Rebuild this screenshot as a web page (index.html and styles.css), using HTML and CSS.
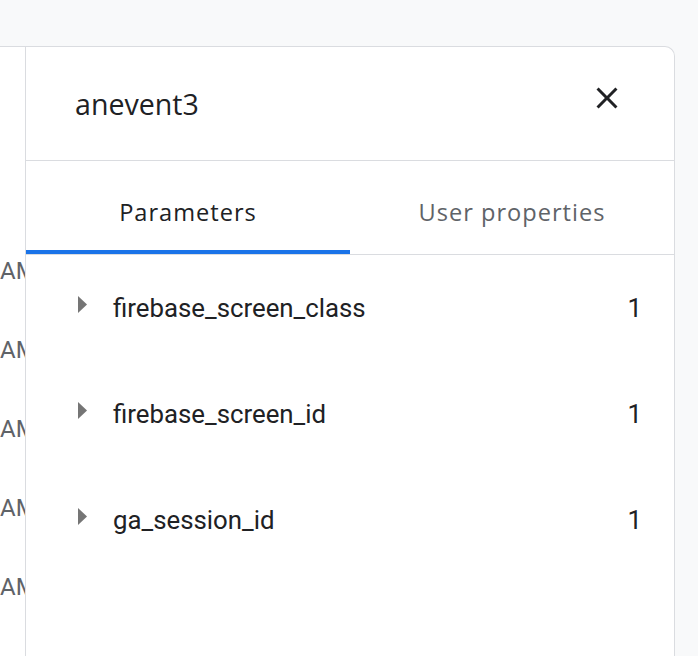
FILE: index.html
```html
<!DOCTYPE html>
<html lang="en">
<head>
<meta charset="utf-8">
<title>anevent3</title>
<link rel="stylesheet" href="styles.css">
</head>
<body>
<div class="page">
  <div class="table-edge">
    <div class="edge-rows">
      <div class="edge-row">AM</div>
      <div class="edge-row">AM</div>
      <div class="edge-row">AM</div>
      <div class="edge-row">AM</div>
      <div class="edge-row">AM</div>
    </div>
  </div>
  <aside class="panel">
    <header class="panel-header">
      <h2 class="title">anevent3</h2>
      <button class="close" aria-label="Close">
        <svg width="36" height="36" viewBox="0 0 24 24"><path d="M19 6.41L17.59 5 12 10.59 6.41 5 5 6.41 10.59 12 5 17.59 6.41 19 12 13.41 17.59 19 19 17.59 13.41 12z"/></svg>
      </button>
    </header>
    <nav class="tabs">
      <div class="tab active">Parameters</div>
      <div class="tab">User properties</div>
    </nav>
    <ul class="params">
      <li class="param">
        <svg class="caret" width="9" height="17" viewBox="0 0 9 17"><path d="M0 0L9 8.5 0 17z"/></svg>
        <span class="name">firebase_screen_class</span>
        <span class="count">1</span>
      </li>
      <li class="param">
        <svg class="caret" width="9" height="17" viewBox="0 0 9 17"><path d="M0 0L9 8.5 0 17z"/></svg>
        <span class="name">firebase_screen_id</span>
        <span class="count">1</span>
      </li>
      <li class="param">
        <svg class="caret" width="9" height="17" viewBox="0 0 9 17"><path d="M0 0L9 8.5 0 17z"/></svg>
        <span class="name">ga_session_id</span>
        <span class="count">1</span>
      </li>
    </ul>
  </aside>
  <div class="gutter"></div>
</div>
</body>
</html>
```

FILE: styles.css
```css
html, body {
  margin: 0;
  padding: 0;
}

body {
  background: #f8f9fa;
  width: 698px;
  height: 656px;
  overflow: hidden;
  font-family: Roboto, "Liberation Sans", Arial, sans-serif;
  color: #202124;
}

.page {
  display: flex;
  box-sizing: border-box;
  height: 656px;
  padding-top: 46px;
}

.table-edge {
  flex: none;
  width: 25px;
  background: #fff;
  border-top: 1px solid #dadce0;
  overflow: hidden;
}

.edge-rows {
  padding-top: 185px;
}

.edge-row {
  height: 79px;
  line-height: 79px;
  font-size: 24px;
  color: #5f6368;
  white-space: nowrap;
}

.panel {
  flex: none;
  box-sizing: border-box;
  width: 650px;
  background: #fff;
  border: 1px solid #dadce0;
  border-bottom: none;
  border-radius: 0 10px 0 0;
  display: flex;
  flex-direction: column;
}

.panel-header {
  height: 113px;
  border-bottom: 1px solid #dadce0;
  display: flex;
  align-items: flex-start;
  justify-content: space-between;
  padding: 0 49px 0 49px;
}

.title {
  margin: 38px 0 0;
  font-family: "Open Sans", Roboto, sans-serif;
  font-weight: 400;
  font-size: 28.6px;
  line-height: 38px;
  color: #202124;
}

.close {
  margin-top: 33px;
  width: 36px;
  height: 36px;
  padding: 0;
  border: none;
  background: none;
  fill: #202124;
}

.close svg {
  display: block;
}

.tabs {
  display: flex;
  height: 93px;
  border-bottom: 1px solid #dadce0;
}

.tab {
  flex: 1;
  box-sizing: border-box;
  height: 93px;
  padding-top: 35px;
  border-bottom: 4px solid transparent;
  text-align: center;
  font-family: "Open Sans", Roboto, sans-serif;
  font-size: 23.6px;
  line-height: 32px;
  letter-spacing: 1px;
  color: #5f6368;
}

.tab.active {
  color: #202124;
  border-bottom-color: #1a73e8;
}

.params {
  list-style: none;
  margin: 0;
  padding: 0;
}

.param {
  height: 106px;
  display: flex;
  align-items: center;
  font-size: 25.8px;
}

.caret {
  flex: none;
  margin: 0 0 8px 52px;
  fill: #757575;
}

.name {
  flex: 1;
  margin-left: 26px;
  color: #202124;
}

.count {
  padding-right: 32px;
  color: #202124;
}

.gutter {
  flex: 1;
}
```
